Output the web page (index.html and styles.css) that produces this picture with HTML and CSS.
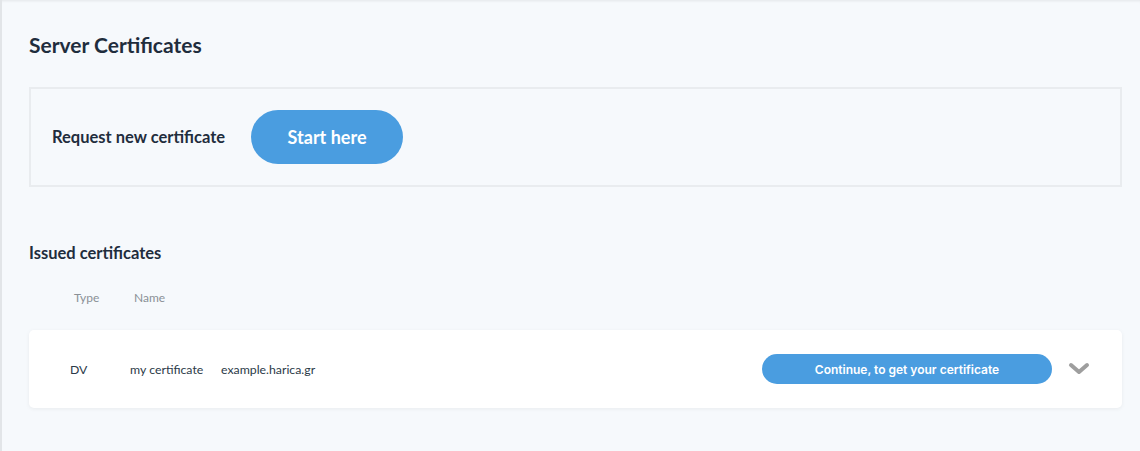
FILE: index.html
```html
<!DOCTYPE html>
<html lang="en">
<head>
<meta charset="utf-8">
<title>Server Certificates</title>
<link rel="stylesheet" href="styles.css">
</head>
<body>
<main class="page">
  <h1 class="title">Server Certificates</h1>
  <section class="request-box">
    <span class="request-label">Request new certificate</span>
    <button class="btn-start">Start here</button>
  </section>
  <h2 class="subtitle">Issued certificates</h2>
  <div class="table-head">
    <span class="col-type">Type</span>
    <span class="col-name">Name</span>
  </div>
  <div class="cert-card">
    <span class="cell-type">DV</span>
    <span class="cell-name">my certificate</span>
    <span class="cell-domain">example.harica.gr</span>
    <span class="spacer"></span>
    <button class="btn-continue">Continue, to get your certificate</button>
    <svg class="chevron" width="22" height="14" viewBox="0 0 22 14" aria-hidden="true">
      <path d="M3 3 L11 10 L19 3" fill="none" stroke="#9e9e9e" stroke-width="4" stroke-linecap="round" stroke-linejoin="round"/>
    </svg>
  </div>
</main>
</body>
</html>
```

FILE: styles.css
```css
html, body {
  margin: 0;
  padding: 0;
  height: 100%;
}
body {
  background: #f6f9fc;
  font-family: Lato, "Open Sans", sans-serif;
  color: #1f2d3d;
  border-left: 2px solid #e2e5e8;
  box-shadow: inset 0 3px 3px -2px rgba(0,0,0,0.08);
  box-sizing: border-box;
}
.page {
  padding: 31px 18px 0 27px;
}
.title {
  margin: 0;
  font-size: 21px;
  font-weight: 700;
  line-height: 28px;
  color: #1f2d3d;
}
.request-box {
  margin-top: 28px;
  height: 100px;
  box-sizing: border-box;
  border: 2px solid #e9ecef;
  display: flex;
  align-items: center;
  padding-left: 21px;
  gap: 26px;
}
.request-label {
  font-size: 16.5px;
  font-weight: 700;
  color: #1f2d3d;
}
.btn-start {
  width: 152px;
  height: 54px;
  border: none;
  border-radius: 27px;
  background: #4a9de0;
  color: #ffffff;
  font-family: Lato, sans-serif;
  font-size: 18px;
  font-weight: 700;
  padding: 0;
}
.subtitle {
  margin: 55px 0 0;
  font-size: 16.5px;
  font-weight: 700;
  line-height: 22px;
  color: #1f2d3d;
}
.table-head {
  display: flex;
  margin-top: 26px;
  padding-left: 45px;
  font-size: 12px;
  color: #8a9096;
  line-height: 16px;
}
.col-type { width: 60px; }
.cert-card {
  margin-top: 24px;
  height: 78px;
  background: #ffffff;
  border-radius: 5px;
  box-shadow: 0 1px 4px rgba(0,0,0,0.06);
  display: flex;
  align-items: center;
  padding: 0 32px 0 41px;
  font-size: 12.3px;
  color: #2b3a48;
}
.cell-type { width: 60px; }
.cell-name { width: 91px; }
.spacer { flex: 1; }
.btn-continue {
  width: 290px;
  height: 30px;
  border: none;
  border-radius: 15px;
  background: #4a9de0;
  color: #ffffff;
  font-family: Inter, "Open Sans", sans-serif;
  font-size: 12px;
  font-weight: 600;
  padding: 0;
}
.chevron {
  margin-left: 16px;
  display: block;
}
```
